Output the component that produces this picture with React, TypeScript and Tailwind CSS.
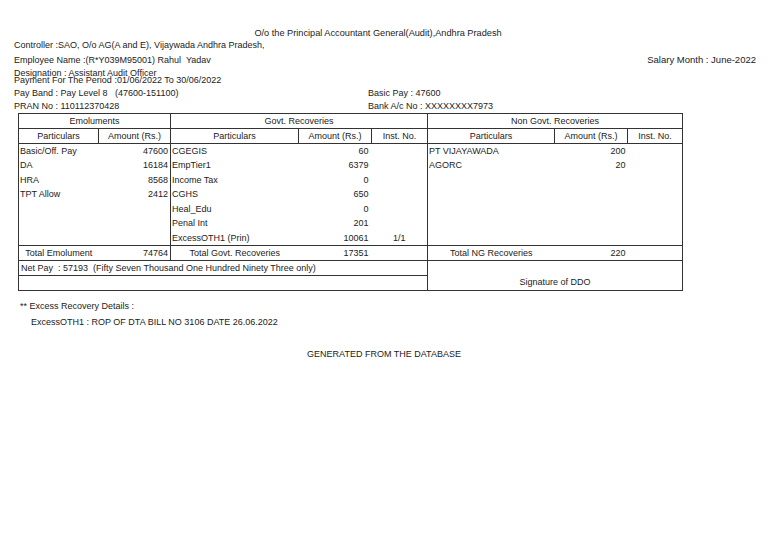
import React from 'react';

// one line of the recovery tables: [particulars, amount, inst]
type Line = [string, string, string?];

const emoluments: [string, string][] = [
  ['Basic/Off. Pay', '47600'],
  ['DA', '16184'],
  ['HRA', '8568'],
  ['TPT Allow', '2412'],
];

const govt: Line[] = [
  ['CGEGIS', '60'],
  ['EmpTier1', '6379'],
  ['Income Tax', '0'],
  ['CGHS', '650'],
  ['Heal_Edu', '0'],
  ['Penal Int', '201'],
  ['ExcessOTH1 (Prin)', '10061', '1/1'],
];

const nonGovt: Line[] = [
  ['PT VIJAYAWADA', '200'],
  ['AGORC', '20'],
];

const cell = 'border border-[#333] p-0';

export default function App() {
  const rows = Array.from({ length: 7 }, (_, i) => i);

  return (
    <div
      className="w-[768px] h-[543px] bg-white text-[#222] text-[9px] overflow-hidden"
      style={{ fontFamily: '"Liberation Sans", Arial, sans-serif' }}
    >
      <div className="pt-[28px] pl-[14px] pr-[12px]">
        <div className="leading-[11px] text-center pr-[14px] text-[9.2px]">
          O/o the Principal Accountant General(Audit),Andhra Pradesh
        </div>
        <div className="leading-[12px]">Controller :SAO, O/o AG(A and E), Vijaywada Andhra Pradesh,</div>
        <div className="mt-[3px] leading-[12px] flex justify-between">
          <span>Employee Name :(R*Y039M95001) Rahul&nbsp; Yadav</span>
          <span className="text-[9.5px]">Salary Month : June-2022</span>
        </div>
        <div className="mt-[4px] leading-[7px]">Designation : Assistant Audit Officer</div>
        <div className="leading-[7px]">Payment For The Period :01/06/2022 To 30/06/2022</div>
        <div className="mt-[3px] leading-[13px] flex">
          <span className="w-[354px] whitespace-pre">Pay Band : Pay Level 8   (47600-151100)</span>
          <span>Basic Pay : 47600</span>
        </div>
        <div className="leading-[13px] flex">
          <span className="w-[354px]">PRAN No : 110112370428</span>
          <span>Bank A/c No : XXXXXXXX7973</span>
        </div>
      </div>

      {/* pay slip table */}
      <table className="ml-[18px] w-[664px] table-fixed border-collapse leading-[14px]">
        <colgroup>
          <col className="w-[80px]" />
          <col className="w-[72px]" />
          <col className="w-[128px]" />
          <col className="w-[73px]" />
          <col className="w-[56px]" />
          <col className="w-[127px]" />
          <col className="w-[73px]" />
          <col className="w-[55px]" />
        </colgroup>
        <tbody>
          <tr className="h-[15px] text-center">
            <td colSpan={2} className={cell}>Emoluments</td>
            <td colSpan={3} className={cell}>Govt. Recoveries</td>
            <td colSpan={3} className={cell}>Non Govt. Recoveries</td>
          </tr>
          <tr className="h-[15px] text-center">
            <td className={cell}>Particulars</td>
            <td className={cell}>Amount (Rs.)</td>
            <td className={cell}>Particulars</td>
            <td className={cell}>Amount (Rs.)</td>
            <td className={cell}>Inst. No.</td>
            <td className={cell}>Particulars</td>
            <td className={cell}>Amount (Rs.)</td>
            <td className={cell}>Inst. No.</td>
          </tr>
          {rows.map((i) => {
            const e = emoluments[i];
            const g = govt[i];
            const n = nonGovt[i];
            return (
              <tr key={i} className="h-[14.5px] align-top">
                <td className="border-l border-[#333] p-0 pl-[1px] whitespace-nowrap">{e?.[0]}</td>
                <td className="p-0 pr-[2px] text-right">{e?.[1]}</td>
                <td className="border-l border-[#333] p-0 pl-[1px]">{g?.[0]}</td>
                <td className="p-0 pr-[3px] text-right">{g?.[1]}</td>
                <td className="p-0 text-center">{g?.[2]}</td>
                <td className="border-l border-[#333] p-0 pl-[1px]">{n?.[0]}</td>
                <td className="p-0 pr-[2px] text-right">{n?.[1]}</td>
                <td className="border-r border-[#333] p-0 text-center">{n?.[2]}</td>
              </tr>
            );
          })}
          <tr className="h-[14px]">
            <td className="border-y border-l border-[#333] p-0 text-center">Total Emolument</td>
            <td className="border-y border-[#333] p-0 pr-[2px] text-right">74764</td>
            <td className="border-y border-l border-[#333] p-0 text-center">Total Govt. Recoveries</td>
            <td className="border-y border-[#333] p-0 pr-[3px] text-right">17351</td>
            <td className="border-y border-[#333] p-0"></td>
            <td className="border-y border-l border-[#333] p-0 text-center">Total NG Recoveries</td>
            <td className="border-y border-[#333] p-0 pr-[2px] text-right">220</td>
            <td className="border-y border-r border-[#333] p-0"></td>
          </tr>
          <tr className="h-[15px]">
            <td colSpan={5} className={`${cell} pl-[2px] whitespace-pre`}>
              Net Pay  : 57193  (Fifty Seven Thousand One Hundred Ninety Three only)
            </td>
            <td colSpan={3} rowSpan={2} className={`${cell} text-center align-bottom pb-[1px]`}>
              Signature of DDO
            </td>
          </tr>
          <tr className="h-[15px]">
            <td colSpan={5} className={cell}></td>
          </tr>
        </tbody>
      </table>

      <div className="mt-[9px] pl-[20px] leading-[12px]">** Excess Recovery Details :</div>
      <div className="mt-[4px] pl-[31px] leading-[12px]">
        ExcessOTH1 : ROP OF DTA BILL NO 3106 DATE 26.06.2022
      </div>
      <div className="mt-[20px] leading-[12px] text-center">GENERATED FROM THE DATABASE</div>
    </div>
  );
}
